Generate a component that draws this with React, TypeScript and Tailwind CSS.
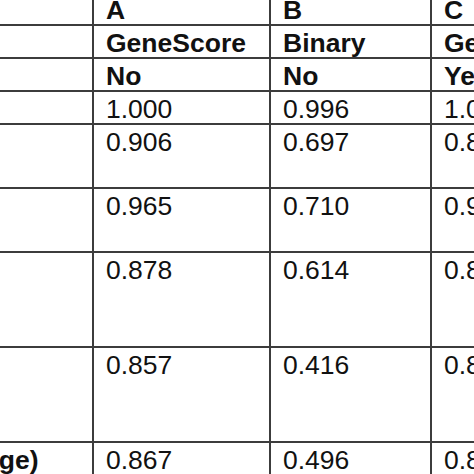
import React from 'react';

type Row = { label: string; cells: string[]; h: string; bold?: boolean };

// rows of the comparison table; the left column runs off the page
const rows: Row[] = [
  { label: '', cells: ['A', 'B', 'C'], h: 'h-[31px]', bold: true },
  { label: '', cells: ['GeneScore', 'Binary', 'GeneScore'], h: 'h-[31px]', bold: true },
  { label: '', cells: ['No', 'No', 'Yes'], h: 'h-[31px]', bold: true },
  { label: '', cells: ['1.000', '0.996', '1.000'], h: 'h-[31px]' },
  { label: '', cells: ['0.906', '0.697', '0.861'], h: 'h-[62px]' },
  { label: '', cells: ['0.965', '0.710', '0.952'], h: 'h-[62px]' },
  { label: '', cells: ['0.878', '0.614', '0.843'], h: 'h-[93px]' },
  { label: '', cells: ['0.857', '0.416', '0.822'], h: 'h-[93px]' },
  { label: 'Total (average)', cells: ['0.867', '0.496', '0.845'], h: 'h-[62px]' },
];

export default function App() {
  return (
    <div
      className="w-[474px] h-[474px] overflow-hidden bg-white"
      style={{ fontFamily: '"Liberation Sans", Arial, sans-serif' }}
    >
      <div className="-mt-[7px] -ml-[172px] grid grid-cols-[264px_175px_159px_200px] gap-[2px] bg-[#3c3c3c] w-max text-[26.5px] leading-[30px] text-[#111]">
        {rows.map((r, i) => (
          <React.Fragment key={i}>
            <div className={`${r.h} bg-white pl-[24px] pt-[2px] font-bold whitespace-nowrap`}>{r.label}</div>
            {r.cells.map((c, j) => (
              <div key={j} className={`${r.h} bg-white pl-[12px] pt-[2px] ${r.bold ? 'font-bold' : ''}`}>
                {c}
              </div>
            ))}
          </React.Fragment>
        ))}
      </div>
    </div>
  );
}
